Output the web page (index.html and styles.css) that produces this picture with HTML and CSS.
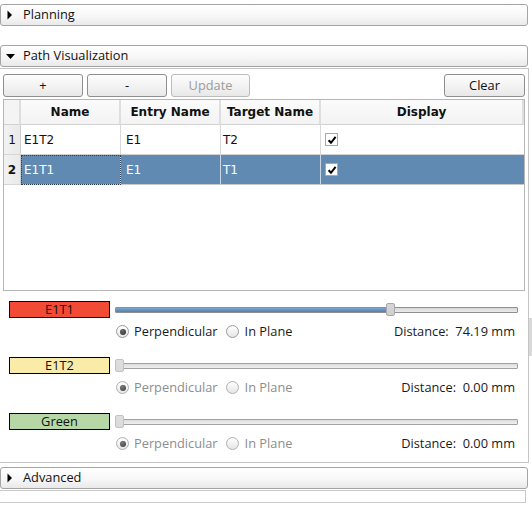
FILE: index.html
```html
<!DOCTYPE html>
<html>
<head>
<meta charset="utf-8">
<link rel="stylesheet" href="styles.css">
</head>
<body>
<div class="app">
  <div class="sec-head">
    <svg class="tri" width="10" height="10" viewBox="0 0 10 10"><polygon points="1.5,0.5 6,5 1.5,9.5" fill="#000"/></svg>
    <span class="sec-title">Planning</span>
  </div>
  <div class="sec-head sec-open">
    <svg class="tri" width="10" height="10" viewBox="0 0 10 10"><polygon points="0,3 9,3 4.5,8" fill="#000"/></svg>
    <span class="sec-title">Path Visualization</span>
  </div>
  <div class="panel">
    <div class="toolbar">
      <button class="btn">+</button>
      <button class="btn">-</button>
      <button class="btn" disabled>Update</button>
      <span class="grow"></span>
      <button class="btn btn-clear">Clear</button>
    </div>
    <div class="table">
      <div class="grid">
        <div class="hcell corner"></div>
        <div class="hcell">Name</div>
        <div class="hcell">Entry Name</div>
        <div class="hcell">Target Name</div>
        <div class="hcell hlast">Display</div>

        <div class="rownum">1</div>
        <div class="cell c-name">E1T2</div>
        <div class="cell c-entry">E1</div>
        <div class="cell c-target">T2</div>
        <div class="cell c-disp"><span class="chk"><svg width="10" height="10" viewBox="0 0 10 10"><path d="M1.6 5.2 L4 7.8 L8.6 1.8" fill="none" stroke="#000" stroke-width="2"/></svg></span></div>

        <div class="rownum cur">2</div>
        <div class="cell sel c-name focus">E1T1</div>
        <div class="cell sel c-entry">E1</div>
        <div class="cell sel c-target">T1</div>
        <div class="cell sel c-disp"><span class="chk"><svg width="10" height="10" viewBox="0 0 10 10"><path d="M1.6 5.2 L4 7.8 L8.6 1.8" fill="none" stroke="#000" stroke-width="2"/></svg></span></div>
      </div>
    </div>

    <div class="groups">
      <div class="group">
        <div class="tag tag-red">E1T1</div>
        <div class="slider">
          <div class="groove"><div class="fill" style="width:272px"></div></div>
          <div class="handle" style="left:271px"></div>
        </div>
        <div></div>
        <div class="opts">
          <span class="radio on"></span><span class="opt-label">Perpendicular</span>
          <span class="radio second"></span><span class="opt-label">In Plane</span>
          <span class="dist">Distance:  74.19 mm</span>
        </div>
      </div>

      <div class="group">
        <div class="tag tag-yellow">E1T2</div>
        <div class="slider off">
          <div class="groove"></div>
          <div class="handle" style="left:0px"></div>
        </div>
        <div></div>
        <div class="opts disabled">
          <span class="radio on"></span><span class="opt-label">Perpendicular</span>
          <span class="radio second"></span><span class="opt-label">In Plane</span>
          <span class="dist">Distance:  0.00 mm</span>
        </div>
      </div>

      <div class="group">
        <div class="tag tag-green">Green</div>
        <div class="slider off">
          <div class="groove"></div>
          <div class="handle" style="left:0px"></div>
        </div>
        <div></div>
        <div class="opts disabled">
          <span class="radio on"></span><span class="opt-label">Perpendicular</span>
          <span class="radio second"></span><span class="opt-label">In Plane</span>
          <span class="dist">Distance:  0.00 mm</span>
        </div>
      </div>
    </div>
  </div>

  <div class="sec-head sec-adv">
    <svg class="tri" width="10" height="10" viewBox="0 0 10 10"><polygon points="1.5,0.5 6,5 1.5,9.5" fill="#000"/></svg>
    <span class="sec-title">Advanced</span>
  </div>
  <div class="tail"></div>
</div>
<div class="scroll-edge"></div>
</body>
</html>
```

FILE: styles.css
```css
* { box-sizing: border-box; margin: 0; padding: 0; }

body {
  width: 532px;
  height: 508px;
  background: #fff;
  font-family: "Open Sans", "Noto Sans", sans-serif;
  font-size: 12.8px;
  color: #1a1a1a;
  overflow: hidden;
  position: relative;
}

.app {
  padding-top: 4px;
  width: 529px;
}

/* collapsible section headers */
.sec-head {
  width: 528px;
  height: 22px;
  border: 1px solid #a4a4a4;
  border-radius: 3px;
  background: linear-gradient(#ffffff, #f6f6f6 60%, #e9e9e9);
  display: flex;
  align-items: center;
  padding-left: 5px;
  padding-bottom: 2px;
}
.sec-head .tri { flex: none; margin-right: 7px; margin-top: 1px; }
.sec-title { line-height: 1; color: #111; }
.sec-open { margin-top: 19px; }
.sec-adv { margin-top: 4px; }

.tail {
  margin-top: 1px;
  width: 526px;
  height: 13px;
  border: 1px solid #cacaca;
  border-left: none;
}

/* panel */
.panel {
  margin-top: 1px;
  width: 529px;
  border: 1px solid #c4c4c4;
  border-left: none;
  padding: 5px 1px 10px 3px;
}

.toolbar {
  display: flex;
  gap: 4px;
  height: 23px;
}
.grow { flex: 1; }
.btn {
  width: 80px;
  height: 23px;
  border: 1px solid #8e8e8e;
  border-radius: 3px;
  background: linear-gradient(#fdfdfd, #f1f1f1 60%, #e8e8e8);
  font-family: "Open Sans", "Noto Sans", sans-serif;
  font-size: 12.8px;
  color: #111;
  padding-bottom: 2px;
}
.btn:disabled {
  color: #9b9b9b;
  border-color: #bcbcbc;
  width: 79px;
}
.btn-clear { width: 81px; margin-right: 2px; }

/* table */
.table {
  margin-top: 2px;
  width: 522px;
  height: 192px;
  border: 1px solid #b6b6b6;
  background: #fff;
  font-family: "DejaVu Sans", sans-serif;
  font-size: 12px;
  color: #111;
}
.grid {
  display: grid;
  grid-template-columns: 17px 100px 100px 100px 1fr;
  grid-template-rows: 25px 30px 30px;
}
.hcell {
  background: linear-gradient(#fbfbfb, #f3f3f3);
  border-bottom: 1px solid #d2d2d2;
  border-right: 2px solid #dedede;
  font-weight: bold;
  display: flex;
  align-items: center;
  justify-content: center;
}
.hcell.corner { background: #f4f4f4; }

.rownum {
  background: linear-gradient(90deg, #f2f2f2, #e9e9e9);
  border-bottom: 1px solid #d6d6d6;
  border-right: 1px solid #cfcfcf;
  display: flex;
  align-items: center;
  justify-content: center;
}
.rownum.cur { font-weight: bold; }

.cell {
  border-bottom: 1px solid #d2d2d2;
  border-right: 1px solid #d8d8d8;
  display: flex;
  align-items: center;
  padding-left: 3px;
}
.c-entry { padding-left: 5px; }
.c-target { padding-left: 2px; }
.c-disp { padding-left: 4px; border-right: none; }
.cell.sel {
  background: #618ab3;
  color: #fff;
  border-right-color: #c9d6e3;
  border-bottom-color: #c9c9c9;
}
.cell.focus { outline: 1px dotted #2c3e52; outline-offset: -1px; }

.chk {
  width: 13px;
  height: 13px;
  border: 1px solid #a8a8a8;
  background: #fff;
  display: flex;
  align-items: center;
  justify-content: center;
}

/* slider groups */
.groups {
  margin-top: 10px;
  padding-left: 6px;
  display: flex;
  flex-direction: column;
  gap: 17px;
}
.group {
  display: grid;
  grid-template-columns: 101px 403px;
  grid-template-rows: 17px 17px;
  column-gap: 5px;
  row-gap: 5px;
}
.tag {
  border: 1px solid #000;
  display: flex;
  align-items: center;
  justify-content: center;
  color: #111;
  line-height: 1;
  padding-bottom: 1px;
}
.tag-red { background: #f24b35; }
.tag-yellow { background: #f9eca9; }
.tag-green { background: #b6d8a7; }

.slider {
  position: relative;
  display: flex;
  align-items: center;
}
.groove {
  width: 100%;
  height: 6px;
  border: 1px solid #909090;
  border-radius: 1px;
  background: linear-gradient(#d6d6d6, #ececec);
  position: relative;
  overflow: hidden;
}
.fill {
  height: 100%;
  background: linear-gradient(#7ea6d0, #4f7fb2);
  border-right: 1px solid #3d6896;
}
.slider.off .groove {
  border-color: #a2a2a2;
  background: linear-gradient(#dcdcdc, #f0f0f0);
}
.handle {
  position: absolute;
  top: 2px;
  width: 9px;
  height: 13px;
  border: 1px solid #a9a9a9;
  border-radius: 2px;
  background:
    radial-gradient(circle, #c4c4c4 0.6px, transparent 0.9px) 0 0 / 2px 2px,
    linear-gradient(#f6f6f6, #e2e2e2);
}
.slider.off .handle { border-color: #c2c2c2; background:
    radial-gradient(circle, #d0d0d0 0.6px, transparent 0.9px) 0 0 / 2px 2px,
    linear-gradient(#f8f8f8, #ececec); }

.opts {
  display: flex;
  align-items: center;
  padding-left: 1px;
  padding-right: 3px;
  padding-bottom: 2px;
  color: #1a1a1a;
}
.radio {
  flex: none;
  width: 13px;
  height: 13px;
  border-radius: 50%;
  border: 1px solid #9a9a9a;
  background: linear-gradient(#ffffff, #e6e6e6);
  margin-right: 5px;
  margin-top: 2px;
  display: flex;
  align-items: center;
  justify-content: center;
}
.radio.on::after {
  content: "";
  width: 6px;
  height: 6px;
  border-radius: 50%;
  background: radial-gradient(circle at 40% 35%, #6a6a6a, #2a2a2a);
}
.radio.second { margin-left: 8px; margin-right: 6px; }
.opt-label { white-space: nowrap; }
.dist { margin-left: auto; white-space: pre; color: #1a1a1a; }
.opts.disabled .opt-label { color: #8d8d8d; }
.opts.disabled .radio { border-color: #b0b0b0; }
.opts.disabled .radio.on::after { background: radial-gradient(circle at 40% 35%, #7a7a7a, #3a3a3a); }

.scroll-edge {
  position: absolute;
  left: 529px;
  top: 318px;
  width: 3px;
  height: 38px;
  background: #d9d9d9;
}
```
